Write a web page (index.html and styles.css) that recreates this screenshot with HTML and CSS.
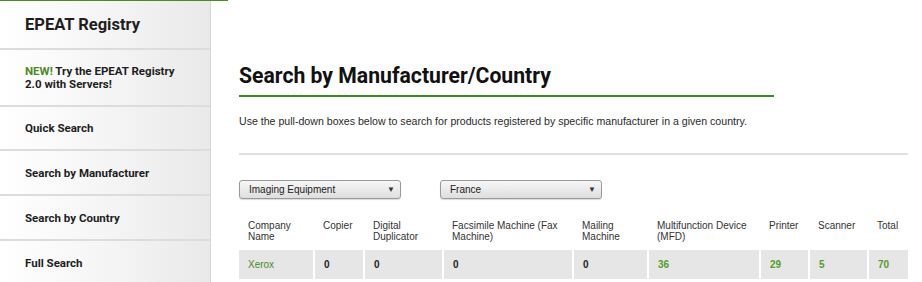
FILE: index.html
```html
<!DOCTYPE html>
<html>
<head>
  <title>EPEAT Registry - Search by Manufacturer/Country</title>
  <meta content="width=device-width, initial-scale=1" name="viewport" />
  <link rel="stylesheet" href="styles.css">
</head>
<body>
  <div class="topLine"></div>
  <div class="page">
    <div class="sidebar">
      <div class="sideTitle">EPEAT Registry</div>
      <a class="sideItem sideNew" href="#">
        <div><span class="newTag">NEW!</span> <span>Try the EPEAT Registry</span><br><span>2.0 with Servers!</span></div>
      </a>
      <a class="sideItem sideQuick" href="#">Quick Search</a>
      <a class="sideItem" href="#">Search by Manufacturer</a>
      <a class="sideItem" href="#">Search by Country</a>
      <a class="sideItem" href="#">Full Search</a>
    </div>

    <div class="main">
      <h1>Search by Manufacturer/Country</h1>
      <p class="intro">Use the pull-down boxes below to search for products registered by specific manufacturer in a given country.</p>
      <hr>

      <div class="filters">
        <div class="selectBox"><span>Imaging Equipment</span><span class="arrow">&#9660;</span></div>
        <div class="selectBox"><span>France</span><span class="arrow">&#9660;</span></div>
      </div>

      <table class="results">
        <colgroup>
          <col style="width: 75px">
          <col style="width: 50px">
          <col style="width: 79px">
          <col style="width: 130px">
          <col style="width: 75px">
          <col style="width: 112px">
          <col style="width: 49px">
          <col style="width: 59px">
          <col style="width: 40px">
        </colgroup>
        <thead>
          <tr>
            <th>Company Name</th>
            <th>Copier</th>
            <th>Digital Duplicator</th>
            <th>Facsimile Machine (Fax Machine)</th>
            <th>Mailing Machine</th>
            <th>Multifunction Device (MFD)</th>
            <th>Printer</th>
            <th>Scanner</th>
            <th>Total</th>
          </tr>
        </thead>
        <tbody>
          <tr>
            <td class="company">Xerox</td>
            <td>0</td>
            <td>0</td>
            <td>0</td>
            <td>0</td>
            <td class="hit">36</td>
            <td class="hit">29</td>
            <td class="hit">5</td>
            <td class="hit">70</td>
          </tr>
        </tbody>
      </table>
    </div>
  </div>
</body>
</html>
```

FILE: styles.css
```css
body {
  margin: 0;
  font-family: "Liberation Sans", Arial, sans-serif;
  color: #333;
  background: #fff;
}
.topLine {
  width: 228px;
  height: 1px;
  background-color: #4c8a24;
}
.page {
  display: flex;
  align-items: flex-start;
}
.sidebar {
  width: 210px;
  flex-shrink: 0;
  border-right: 1px solid #d6d6d6;
  background: linear-gradient(to right, #ffffff 0%, #f3f3f3 60%, #e9e9e9 100%);
  font-family: Roboto, "Liberation Sans", sans-serif;
  font-weight: bold;
  color: #1e1e1e;
}
.sideTitle {
  height: 47px;
  padding-left: 25px;
  display: flex;
  align-items: center;
  font-size: 16.5px;
  border-bottom: 2px solid #dcdcdc;
}
.sideItem {
  display: flex;
  align-items: center;
  height: 43px;
  padding-left: 25px;
  padding-right: 20px;
  font-size: 11.5px;
  color: #1e1e1e;
  text-decoration: none;
  border-bottom: 2px solid #dcdcdc;
}
.sideNew {
  height: 55px;
  line-height: 13px;
}
.sideQuick {
  height: 42px;
}
.sideItem:last-child {
  border-bottom: none;
}
.newTag {
  color: #4c8a24;
}
.main {
  flex: 1;
  padding: 62px 14px 0 28px;
}
h1 {
  width: 535px;
  margin: 0;
  padding-bottom: 7px;
  font-family: Roboto, "Liberation Sans", sans-serif;
  font-size: 21.2px;
  line-height: 25px;
  color: #111;
  border-bottom: 2px solid #3f8a1c;
}
.intro {
  margin: 17px 0 0;
  font-size: 10.6px;
  line-height: 14px;
  color: #2a2a2a;
}
hr {
  margin: 25px 0 0;
  border: none;
  height: 2px;
  background-color: #e0e0e0;
}
.filters {
  display: flex;
  gap: 39px;
  margin-top: 25px;
}
.selectBox {
  width: 162px;
  height: 19px;
  box-sizing: border-box;
  display: flex;
  align-items: center;
  justify-content: space-between;
  padding: 0 5px 0 9px;
  font-size: 10px;
  color: #222;
  border: 1px solid #9a9a9a;
  border-radius: 3px;
  background: linear-gradient(#f7f7f7, #dedede);
  box-shadow: 0 1px 1px rgba(0, 0, 0, 0.15);
}
.arrow {
  font-size: 8px;
  color: #333;
}
.results {
  width: 669px;
  margin-top: 15px;
  table-layout: fixed;
  border-collapse: collapse;
  font-size: 10px;
  line-height: 11px;
}
.results th {
  text-align: left;
  vertical-align: top;
  font-weight: normal;
  color: #333;
  padding: 6px 9px 8px;
}
.results td {
  background-color: #e6e6e6;
  padding: 9px;
  font-weight: bold;
  color: #222;
  border-left: 2px solid #fff;
}
.results td:first-child {
  border-left: none;
}
.results td.company {
  font-weight: normal;
  color: #4c8a24;
}
.results td.hit {
  color: #5a9a2c;
}
```
